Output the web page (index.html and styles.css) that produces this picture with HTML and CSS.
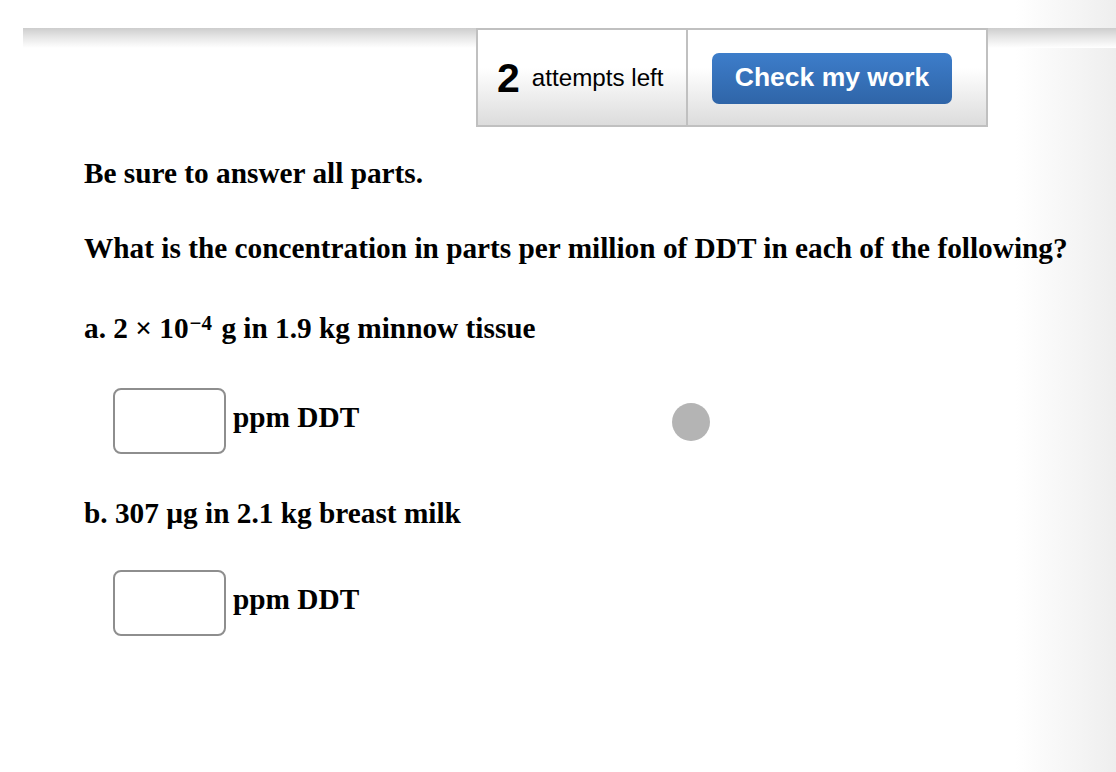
FILE: index.html
```html
<!DOCTYPE html>
<html>
<head>
<meta charset="utf-8">
<link rel="stylesheet" href="styles.css">
</head>
<body>
<header class="header">
  <div class="toolbox">
    <div class="cell attempts">
      <span class="count">2</span>
      <span class="attempts-label">attempts left</span>
    </div>
    <div class="cell action">
      <button class="check-btn">Check my work</button>
    </div>
  </div>
</header>
<main class="question">
  <p class="line first">Be sure to answer all parts.</p>
  <p class="line second">What is the concentration in parts per million of DDT in each of the following?</p>
  <p class="line third">a. 2 × 10<sup class="exp">−4</sup> g in 1.9 kg minnow tissue</p>
  <div class="answer-row row-a">
    <div class="answer-box"></div>
    <span class="unit">ppm DDT</span>
    <span class="dot"></span>
  </div>
  <p class="line fourth">b. 307 µg in 2.1 kg breast milk</p>
  <div class="answer-row row-b">
    <div class="answer-box"></div>
    <span class="unit">ppm DDT</span>
  </div>
</main>
</body>
</html>
```

FILE: styles.css
```css
html, body {
  margin: 0;
  padding: 0;
}
body {
  width: 1116px;
  height: 772px;
  overflow: hidden;
  background: linear-gradient(to right, #ffffff 0, #ffffff 91%, #eeeeee 100%);
  font-family: "Liberation Serif", "Times New Roman", serif;
  color: #000;
}
.header {
  margin: 28px 0 0 23px;
  padding-left: 453px;
  background: linear-gradient(to bottom, #cdcdcd 0, #e6e6e6 9px, #ffffff 20px) no-repeat top left / 100% 20px;
  display: flex;
}
.toolbox {
  display: flex;
  border: 2px solid #c0c0c0;
  height: 95px;
  background: linear-gradient(to bottom, #ffffff 0, #ffffff 40%, #dcdcdc 100%);
}
.cell {
  display: flex;
  align-items: center;
  font-family: "Liberation Sans", Arial, sans-serif;
}
.attempts {
  width: 210px;
  border-right: 2px solid #c0c0c0;
  padding-left: 19px;
  box-sizing: border-box;
}
.count {
  font-size: 41px;
  font-weight: bold;
  line-height: 1;
  margin-right: 12px;
  position: relative;
  top: 1px;
}
.attempts-label {
  font-size: 24.2px;
  position: relative;
  top: 0;
}
.action {
  width: 298px;
  padding-left: 24px;
  box-sizing: border-box;
  align-items: flex-start;
}
.check-btn {
  margin-top: 23px;
  width: 240px;
  height: 51px;
  border: 0;
  border-radius: 7px;
  background: linear-gradient(to bottom, #3d7dca 0, #2f65a8 100%);
  color: #fff;
  font-family: "Liberation Sans", Arial, sans-serif;
  font-weight: bold;
  font-size: 26.5px;
  padding: 0 0 2px 0;
}
.question {
  padding-left: 84px;
}
.line {
  font-size: 29.3px;
  font-weight: bold;
  line-height: 33px;
  margin: 0;
  white-space: nowrap;
}
.first { margin-top: 30px; }
.second { margin-top: 42px; }
.third { margin-top: 47px; }
.fourth { margin-top: 43px; }
.exp {
  font-size: 21px;
  line-height: 0;
  vertical-align: 8px;
  margin-left: 1px;
  margin-right: 2px;
}
.answer-row {
  display: flex;
  align-items: flex-start;
  margin-left: 29px;
  margin-top: 43px;
}
.row-b { margin-top: 40px; }
.answer-box {
  width: 109px;
  height: 62px;
  border: 2px solid #8e8e8e;
  border-radius: 8px;
  background: #fff;
}
.unit {
  font-size: 29.3px;
  font-weight: bold;
  line-height: 33px;
  margin-left: 7px;
  margin-top: 13px;
}
.dot {
  width: 38px;
  height: 38px;
  border-radius: 50%;
  background: #b4b4b4;
  margin-left: 313px;
  margin-top: 15px;
}
```
